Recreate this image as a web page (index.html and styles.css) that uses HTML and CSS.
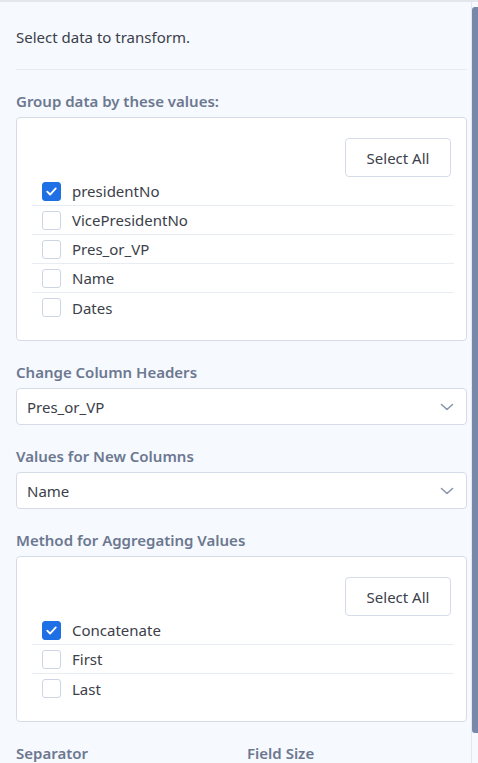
FILE: index.html
```html
<!DOCTYPE html>
<html>
<head>
<meta charset="utf-8">
<link rel="stylesheet" href="styles.css">
</head>
<body>
<div class="frame">
  <main class="panel">
    <p class="intro">Select data to transform.</p>
    <hr class="rule">

    <section class="field">
      <div class="label">Group data by these values:</div>
      <div class="box">
        <div class="box-actions"><button class="btn">Select All</button></div>
        <ul class="checklist">
          <li class="row"><span class="cb checked"><svg viewBox="0 0 18 18"><path d="M4.5 9.2l3 3 6-6.4" fill="none" stroke="#fff" stroke-width="2" stroke-linecap="round" stroke-linejoin="round"/></svg></span><span class="row-text">presidentNo</span></li>
          <li class="row"><span class="cb"></span><span class="row-text">VicePresidentNo</span></li>
          <li class="row"><span class="cb"></span><span class="row-text">Pres_or_VP</span></li>
          <li class="row"><span class="cb"></span><span class="row-text">Name</span></li>
          <li class="row"><span class="cb"></span><span class="row-text">Dates</span></li>
        </ul>
      </div>
    </section>

    <section class="field">
      <div class="label">Change Column Headers</div>
      <div class="select"><span>Pres_or_VP</span><svg class="chev" viewBox="0 0 14 8"><path d="M1.5 1.5l5.5 5 5.5-5" fill="none" stroke="#8a96ad" stroke-width="1.6" stroke-linecap="round" stroke-linejoin="round"/></svg></div>
    </section>

    <section class="field">
      <div class="label">Values for New Columns</div>
      <div class="select"><span>Name</span><svg class="chev" viewBox="0 0 14 8"><path d="M1.5 1.5l5.5 5 5.5-5" fill="none" stroke="#8a96ad" stroke-width="1.6" stroke-linecap="round" stroke-linejoin="round"/></svg></div>
    </section>

    <section class="field">
      <div class="label">Method for Aggregating Values</div>
      <div class="box">
        <div class="box-actions"><button class="btn">Select All</button></div>
        <ul class="checklist">
          <li class="row"><span class="cb checked"><svg viewBox="0 0 18 18"><path d="M4.5 9.2l3 3 6-6.4" fill="none" stroke="#fff" stroke-width="2" stroke-linecap="round" stroke-linejoin="round"/></svg></span><span class="row-text">Concatenate</span></li>
          <li class="row"><span class="cb"></span><span class="row-text">First</span></li>
          <li class="row"><span class="cb"></span><span class="row-text">Last</span></li>
        </ul>
      </div>
    </section>

    <section class="field two-col">
      <div class="label">Separator</div>
      <div class="label">Field Size</div>
    </section>
  </main>
</div>
<div class="scrollthumb"></div>
</body>
</html>
```

FILE: styles.css
```css
* { box-sizing: border-box; }
html, body {
  margin: 0;
  padding: 0;
  height: 763px;
  overflow: hidden;
  background: #f6f9fe;
}
body {
  position: relative;
  font-family: "Noto Sans", "Open Sans", sans-serif;
  font-size: 15px;
  line-height: 22px;
  color: #3b404a;
}
.frame {
  height: 763px;
  border-top: 2px solid #e3e6ec;
}
.panel {
  display: block;
  height: 761px;
  margin-right: 6px;
  padding: 24px 4px 0 16px;
  border-right: 1px solid #e3e8f0;
}
.intro {
  margin: 0;
}
.rule {
  border: 0;
  border-top: 1px solid #e6eaf1;
  margin: 21px 0 20px 0;
}
.field {
  margin-bottom: 20px;
}
.label {
  font-weight: 600;
  color: #6c7890;
  margin-bottom: 5px;
}
.box {
  background: #fff;
  border: 1px solid #d6dce7;
  border-radius: 4px;
  padding: 20px 12px 18px 15px;
}
.box-actions {
  display: flex;
  justify-content: flex-end;
  padding-right: 3px;
}
.btn {
  font: inherit;
  color: #3b404a;
  background: #fff;
  border: 1px solid #d6dce7;
  border-radius: 4px;
  width: 106px;
  height: 39px;
  padding: 0;
}
.checklist {
  list-style: none;
  margin: 0;
  padding: 0;
}
.row {
  display: flex;
  align-items: center;
  gap: 11px;
  height: 29px;
  padding-left: 10px;
  border-bottom: 1px solid #e8edf4;
}
.row:last-child {
  border-bottom: 0;
}
.cb {
  width: 19px;
  height: 19px;
  border: 1px solid #cdd5e4;
  border-radius: 3px;
  background: #fff;
  flex: none;
  display: flex;
  align-items: center;
  justify-content: center;
}
.cb.checked {
  background: #1f6fe5;
  border-color: #1f6fe5;
}
.cb svg {
  width: 17px;
  height: 17px;
}
.select {
  background: #fff;
  border: 1px solid #d6dce7;
  border-radius: 4px;
  height: 37px;
  display: flex;
  align-items: center;
  justify-content: space-between;
  padding: 0 12px 0 10px;
}
.chev {
  width: 14px;
  height: 8px;
}
.two-col {
  display: grid;
  grid-template-columns: 1fr 1fr;
  column-gap: 11px;
}
.scrollthumb {
  position: absolute;
  top: 7px;
  right: 0;
  width: 6px;
  height: 726px;
  background: #7888ab;
  border-radius: 3px 0 0 3px;
}
```
